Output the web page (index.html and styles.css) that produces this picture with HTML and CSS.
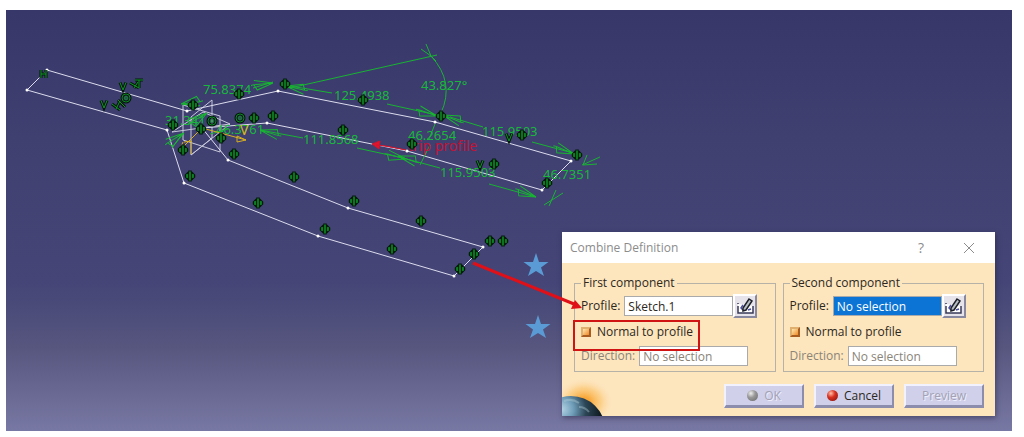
FILE: index.html
```html
<!DOCTYPE html>
<html lang="en">
<head>
<meta charset="utf-8">
<title>Combine Definition</title>
<link rel="stylesheet" href="styles.css">
</head>
<body>
<main class="viewport">
  <svg class="scene" viewBox="6 10 1006 421" preserveAspectRatio="xMinYMin meet" role="img" aria-label="Sketch geometry">
    <defs>
      <g id="c">
        <path d="M-2-3.500h4l2.500 2.500v2l-2.500 2.500h-4l-2.500-2.500v-2z" fill="#0a4a1c" stroke="#021a0a" stroke-width="1.500"/>
        <path d="M-3-2v4M3-2v4" stroke="#12b02c"/>
        <path d="M0-5.500v11" stroke="#021a0a" stroke-width="3.500"/>
        <path d="M0-4.500v9" stroke="#19c834"/>
      </g>
      <g id="o" fill="none">
        <circle r="4" stroke="#021a0a" stroke-width="3"/>
        <circle r="4" stroke="#0c8524"/>
        <circle r="1.500" stroke="#0c8524"/>
      </g>
      <path id="v" d="M-3-3.500L0 4 3-3.500" fill="none"/>
      <path id="a" d="M-19-3L0 0-18-7M-19-3L-17 3 0 0M-19-3h-3" fill="none"/>
    </defs>

    <g class="planes">
      <path d="M183 105l37 11v36l-37-12zM212 100v38l-21 17v-38zM172 132l31-20 27 12-39 31M172 132l58-8"/>
    </g>

    <g class="edges">
      <path d="M167 130L27 90 47 70 187 111 278 91 435 122 571 161 542 190 407 151 267 123 202 128 228 160 348 208 483 247 454 276 318 236 184 183z"/>
    </g>
    <g class="points">
      <circle cx="47" cy="70" r="1.500"/><circle cx="27" cy="90" r="1.500"/><circle cx="187" cy="111" r="1.500"/>
      <circle cx="278" cy="91" r="1.500"/><circle cx="435" cy="122" r="1.500"/><circle cx="571" cy="161" r="1.500"/>
      <circle cx="542" cy="190" r="1.500"/><circle cx="407" cy="151" r="1.500"/><circle cx="267" cy="123" r="1.500"/>
      <circle cx="202" cy="128" r="1.500"/><circle cx="228" cy="160" r="1.500"/><circle cx="348" cy="208" r="1.500"/>
      <circle cx="483" cy="247" r="1.500"/><circle cx="454" cy="276" r="1.500"/><circle cx="318" cy="236" r="1.500"/>
      <circle cx="184" cy="183" r="1.500"/><circle cx="167" cy="130" r="1.500"/>
    </g>

    <g class="dims">
      <path d="M426 44L431 56Q455 82 441 113M421 49l10 7 5 5M437 55L290 88M332 93L290 86M387 104L437 115M450 117L483 127M532 142L573 153M489 184L536 197M357 148L403 158 440 168M260 130L303 138M253 88L273 82M435 124l-6 15M420 165l10-20M600 157l-18 8M583 165l4-10M583 165l14-1M544 205l19-12M549 206l7-16M172 148l10-14M183 105l12-2M210 134l18-5"/>
      <use href="#a" transform="translate(273 83) rotate(-14)"/>
      <use href="#a" transform="translate(286 86) rotate(184)"/>
      <use href="#a" transform="translate(437 116) rotate(10)"/>
      <use href="#a" transform="translate(443 115) rotate(193)"/>
      <use href="#a" transform="translate(574 154) rotate(14)"/>
      <use href="#a" transform="translate(536 197) rotate(14)"/>
      <use href="#a" transform="translate(406 159) rotate(6)"/>
      <use href="#a" transform="translate(398 156) rotate(190)"/>
      <use href="#a" transform="translate(260 130) rotate(188)"/>
      <use href="#a" transform="translate(181 104) rotate(164)"/>
      <use href="#a" transform="translate(184 133) rotate(-40)"/>
      <use href="#a" transform="translate(207 113) rotate(-40)"/>
    </g>

    <g class="numbers">
      <text x="203" y="94">75.8374</text>
      <text x="334" y="100">125.4938</text>
      <text x="421" y="90">43.827°</text>
      <text x="408" y="140">46.2654</text>
      <text x="303" y="144">111.8568</text>
      <text x="482" y="136">115.9503</text>
      <text x="440" y="177">115.9503</text>
      <text x="543" y="179">46.7351</text>
      <text x="165" y="125">31.341</text>
      <text x="216" y="134">46.3761</text>
    </g>

    <g class="callout">
      <path d="M372 144l8-3-1 8zM376 145l10 1 20 4" />
      <text x="408" y="151">trip profile</text>
    </g>

    <g class="axes">
      <path d="M202 128L246 140M237 136l9 4-9 2zM202 128L179 151M179 151l4-9M191 141v13M184 142l8-1"/>
      <text x="240" y="135">V</text>
    </g>

    <g class="vs">
      <g class="vs-back"><use href="#v" x="123" y="86"/><use href="#v" x="104" y="104"/><use href="#v" x="509" y="137"/><use href="#v" x="480" y="164"/>
      <path d="M41 70v8M46 70v8M41 74h5M130 83l9 5M134 88l4-6M135 80h8M139 80v8M112 104l8 6M116 109l4-8M118 100l7 7"/></g>
      <g class="vs-front"><use href="#v" x="123" y="86"/><use href="#v" x="104" y="104"/><use href="#v" x="509" y="137"/><use href="#v" x="480" y="164"/>
      <path d="M41 70v8M46 70v8M41 74h5M130 83l9 5M134 88l4-6M135 80h8M139 80v8M112 104l8 6M116 109l4-8M118 100l7 7"/></g>
    </g>
    <use href="#o" x="126" y="98"/><use href="#o" x="212" y="121"/><use href="#o" x="240" y="118"/>
    <use href="#c" x="193" y="105"/><use href="#c" x="173" y="125"/><use href="#c" x="239" y="94"/>
    <use href="#c" x="285" y="84"/><use href="#c" x="254" y="118"/><use href="#c" x="273" y="116"/>
    <use href="#c" x="201" y="129"/><use href="#c" x="221" y="138"/><use href="#c" x="234" y="154"/>
    <use href="#c" x="190" y="176"/><use href="#c" x="183" y="150"/><use href="#c" x="363" y="100"/>
    <use href="#c" x="441" y="116"/><use href="#c" x="343" y="130"/><use href="#c" x="412" y="144"/>
    <use href="#c" x="294" y="177"/><use href="#c" x="522" y="135"/><use href="#c" x="577" y="155"/>
    <use href="#c" x="494" y="164"/><use href="#c" x="547" y="183"/><use href="#c" x="354" y="201"/>
    <use href="#c" x="258" y="203"/><use href="#c" x="325" y="229"/><use href="#c" x="421" y="221"/>
    <use href="#c" x="392" y="249"/><use href="#c" x="490" y="241"/><use href="#c" x="503" y="241"/>
    <use href="#c" x="474" y="254"/><use href="#c" x="460" y="269"/>
  </svg>

  <form class="dialog" role="dialog" aria-labelledby="dialog-title">
    <header class="titlebar">
      <h1 class="title" id="dialog-title">Combine Definition</h1>
      <button class="window-button" type="button" aria-label="Help">?</button>
      <button class="window-button" type="button" aria-label="Close">
        <svg width="12" height="12" viewBox="0 0 12 12"><path d="M1 1l10 10M11 1L1 11" stroke="#8c8c8c" fill="none"/></svg>
      </button>
    </header>
    <div class="content">
      <svg class="globe" viewBox="0 0 50 40" aria-hidden="true">
        <defs>
          <radialGradient id="glow"><stop offset="0.2" stop-color="#f8a83a"/><stop offset="0.6" stop-color="#fbc46c" stop-opacity="0.6"/><stop offset="1" stop-color="#fde5be" stop-opacity="0"/></radialGradient>
          <radialGradient id="earth" cx="0.36" cy="0.2" r="0.6"><stop offset="0" stop-color="#b4d4e4"/><stop offset="0.3" stop-color="#6e9cb8"/><stop offset="0.6" stop-color="#2c4656"/><stop offset="1" stop-color="#0d171c"/></radialGradient>
        </defs>
        <ellipse cx="22" cy="26" rx="29" ry="24" fill="url(#glow)"/>
        <ellipse cx="9" cy="53" rx="34" ry="33" fill="url(#earth)"/>
        <path d="M2 25q8-3 15 2M17 31q6 0 10 5" fill="none" stroke="#b5d0d7" stroke-opacity="0.4" stroke-width="2"/>
      </svg>
      <div class="groups">
        <fieldset class="group">
          <legend class="legend">First component</legend>
          <div class="row">
            <label for="profile-1">Profile:</label>
            <input class="field" id="profile-1" type="text" value="Sketch.1">
            <button class="sketch-button" type="button" aria-label="Edit first sketch">
              <svg width="19" height="19" viewBox="0 0 19 19"><path d="M2 7v9h15V9" fill="#fff"/><path d="M2 6v1M2 9v7h15V9" fill="none" stroke="#383858" stroke-width="1.500"/><path d="M7 8l-2 3 2 2M12 13l3-1" fill="none" stroke="#4c4ca0" stroke-width="1.500"/><path d="M13 2l3 2-6 9-3 1v-3z" fill="#b8bdc4" stroke="#1d2028" stroke-width="1.500"/></svg>
            </button>
          </div>
          <div class="row check-row">
            <input class="check" id="normal-1" type="checkbox" checked>
            <label for="normal-1">Normal to profile</label>
          </div>
          <div class="row off">
            <label for="direction-1">Direction:</label>
            <input class="field" id="direction-1" type="text" value="No selection" disabled>
          </div>
        </fieldset>
        <fieldset class="group">
          <legend class="legend">Second component</legend>
          <div class="row">
            <label for="profile-2">Profile:</label>
            <input class="field active" id="profile-2" type="text" value="No selection">
            <button class="sketch-button" type="button" aria-label="Edit second sketch">
              <svg width="19" height="19" viewBox="0 0 19 19"><path d="M2 7v9h15V9" fill="#fff"/><path d="M2 6v1M2 9v7h15V9" fill="none" stroke="#383858" stroke-width="1.500"/><path d="M7 8l-2 3 2 2M12 13l3-1" fill="none" stroke="#4c4ca0" stroke-width="1.500"/><path d="M13 2l3 2-6 9-3 1v-3z" fill="#b8bdc4" stroke="#1d2028" stroke-width="1.500"/></svg>
            </button>
          </div>
          <div class="row check-row">
            <input class="check" id="normal-2" type="checkbox" checked>
            <label for="normal-2">Normal to profile</label>
          </div>
          <div class="row off">
            <label for="direction-2">Direction:</label>
            <input class="field" id="direction-2" type="text" value="No selection" disabled>
          </div>
        </fieldset>
      </div>
      <footer class="actions">
        <button class="action" type="submit" disabled><span class="ball"></span>OK</button>
        <button class="action" type="button"><span class="ball red"></span>Cancel</button>
        <button class="action" type="button" disabled>Preview</button>
      </footer>
    </div>
  </form>

  <svg class="scene marks" viewBox="6 10 1006 421" preserveAspectRatio="xMinYMin meet" aria-hidden="true">
    <defs><path id="star" d="M0-13L3-4H12.500L5 1.500 8 10 0 5-8 10-5 1.500-12.500-4H-3z" fill="#5b9bd5"/></defs>
    <use href="#star" x="536" y="266"/>
    <use href="#star" x="538" y="328"/>
    <path d="M473 263L574 304" stroke="#e01018" stroke-width="3"/>
    <path d="M582 308l-11 1 4-9z" fill="#e01018"/>
    <rect x="574" y="321" width="125" height="29" fill="none" stroke="#d01414" stroke-width="2"/>
  </svg>
</main>
</body>
</html>
```
FILE: styles.css
```css
* {
  box-sizing: border-box;
}

body {
  margin: 0;
  padding: 10px 12px 6px 6px;
  background: #fff;
  color: #2c2820;
  font: 13px/18px "Noto Sans", "Open Sans", sans-serif;
}

button,
input {
  font: inherit;
  color: inherit;
}

.viewport {
  position: relative;
  min-height: calc(100vh - 16px);
  overflow: hidden;
  background: linear-gradient(#37376a, #3f3f70 30%, #454577 65%, #56567f 80%, #7878a4);
}

.scene {
  position: absolute;
  top: 0;
  left: 0;
  width: 100%;
}

.marks {
  pointer-events: none;
}

.planes {
  fill: none;
  stroke: #c8c8dc;
}

.edges {
  fill: none;
  stroke: #dcdcee;
}

.points {
  fill: #fff;
}

.dims {
  fill: none;
  stroke: #18b432;
}

.numbers {
  fill: #18b83c;
}

.callout {
  fill: #c01438;
  font-size: 14px;
}

.callout path {
  fill: #e0142c;
  stroke: #d0142c;
}

.axes {
  fill: none;
  stroke: #d8b020;
}

.axes text {
  fill: #d8b020;
  stroke: none;
  font-size: 14px;
}

.vs {
  fill: none;
}

.vs-back {
  stroke: #021a0a;
  stroke-width: 3;
}

.vs-front {
  stroke: #109428;
}

.dialog {
  position: absolute;
  right: 17px;
  bottom: 15px;
  width: 433px;
  background: #fde5be;
  box-shadow: 1px 2px 5px #20204080;
  font-family: "Open Sans", "Noto Sans", sans-serif;
  font-size: 12px;
}

.titlebar {
  display: flex;
  align-items: center;
  height: 31px;
  padding: 0 2px 0 8px;
  background: #fff;
  color: #8c8c8c;
}

.title {
  flex: 1;
  margin: 0;
  font-size: 12px;
  font-weight: 400;
}

.window-button {
  display: grid;
  place-items: center;
  width: 48px;
  height: 30px;
  padding: 0;
  border: 0;
  background: none;
  font-size: 14px;
}

.content {
  position: relative;
  padding: 11px 11px 8px 12px;
}

.globe {
  position: absolute;
  left: 0;
  bottom: 0;
  width: 50px;
  height: 40px;
}

.groups {
  position: relative;
  display: grid;
  grid-template-columns: 1fr 1fr;
  gap: 7px;
}

.group {
  display: grid;
  gap: 2px;
  min-width: 0;
  margin: 0;
  padding: 2px 6px 5px;
  border: 1px solid #b7b2a8;
}

.legend {
  margin: 0;
  padding: 0 2px;
}

.row {
  display: flex;
  align-items: center;
}

.row label {
  flex: none;
}

.off {
  color: #8a8478;
}

.check-row {
  height: 24px;
  gap: 6px;
}

.field {
  width: 109px;
  height: 20px;
  margin-left: 4px;
  padding: 0 3px;
  border: 1px solid #aaa;
  background: #fff;
}

.active {
  background: #0b74d4;
  color: #fff;
}

.sketch-button {
  display: grid;
  place-items: center;
  width: 24px;
  height: 24px;
  padding: 0;
  border: 2px solid;
  border-color: #fff #8888a0 #8888a0 #fff;
  background: #e6e4ea;
}

.check {
  appearance: none;
  width: 10px;
  height: 10px;
  margin: 0;
  border: 2px solid;
  border-color: #e0b070 #a85c20 #a85c20 #e0b070;
  background: linear-gradient(135deg, #ffe8b0, #f08a28);
}

.actions {
  position: relative;
  display: flex;
  justify-content: flex-end;
  gap: 10px;
  margin-top: 12px;
}

.action {
  display: flex;
  align-items: center;
  justify-content: center;
  gap: 6px;
  width: 80px;
  height: 24px;
  padding: 0;
  border: 2px solid;
  border-color: #f2f2ff #8c8cac #8c8cac #f2f2ff;
  border-bottom-width: 3px;
  background: #d0d0ea;
}

.action:disabled {
  color: #a2a2b4;
  text-shadow: 1px 1px #eeeefc;
}

.ball {
  width: 11px;
  height: 11px;
  border-radius: 50%;
  background: radial-gradient(circle at 35% 30%, #eee, #999 40%, #666);
}

.red {
  background: radial-gradient(circle at 35% 30%, #ffc0a8, #d83020 40%, #801008);
}
```
